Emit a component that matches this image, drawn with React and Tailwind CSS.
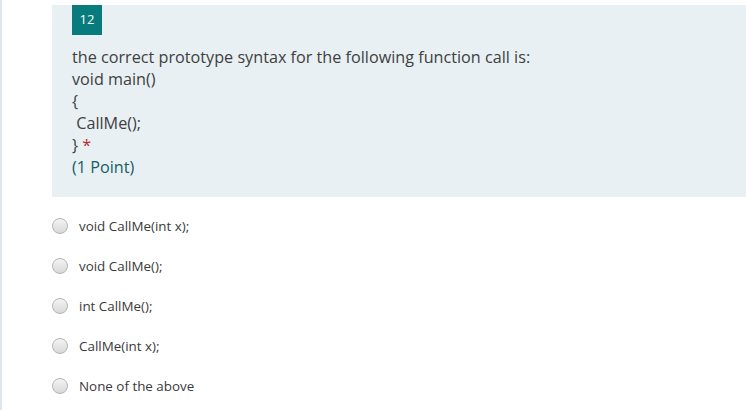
const options = [
  "void CallMe(int x);",
  "void CallMe();",
  "int CallMe();",
  "CallMe(int x);",
  "None of the above",
];

const App = () => {
  return (
    <div
      className="flex min-h-[410px] w-[746px] bg-white text-[#333]"
      style={{ fontFamily: '"Open Sans", "Noto Sans", sans-serif' }}
    >
      {/* Left edge strip */}
      <div className="w-[2px] bg-[#dde8ec]"></div>

      <div className="flex-1 pl-[50px] pt-[5px]">
        {/* Question card */}
        <div className="h-[192px] bg-[#e8f0f3] pl-[20px]">
          <div className="flex h-[30px] w-[30px] items-center justify-center bg-[#087b7c] text-[13px] text-white">
            12
          </div>
          <div className="mt-[11px] text-[16.2px] leading-[22px] text-[#404040]">
            <div>the correct prototype syntax for the following function call is:</div>
            <div>void main()</div>
            <div>{"{"}</div>
            <div>&nbsp;CallMe();</div>
            <div>
              {"}"} <span className="text-[#c4262e]">*</span>
            </div>
            <div className="text-[#155e63]">(1 Point)</div>
          </div>
        </div>

        {/* Options */}
        <div className="flex flex-col gap-[24px] pt-[21px]">
          {options.map((opt) => (
            <div key={opt} className="flex h-[16px] items-center">
              <span className="h-[16px] w-[16px] rounded-full border border-[#b4b4b4] bg-gradient-to-b from-[#f4f4f4] to-[#d8d8d8]"></span>
              <span className="ml-[11px] mt-[1px] text-[13.4px] text-[#3a3a3a]">{opt}</span>
            </div>
          ))}
        </div>
      </div>
    </div>
  );
};

export default App;
